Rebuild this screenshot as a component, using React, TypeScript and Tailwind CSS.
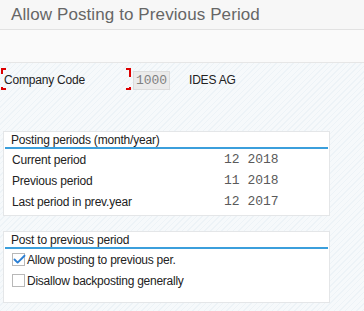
import { Check } from "lucide-react";

const periods = [
  { label: "Current period", value: "12 2018" },
  { label: "Previous period", value: "11 2018" },
  { label: "Last period in prev.year", value: "12 2017" },
];

const options = [
  { label: "Allow posting to previous per.", checked: true },
  { label: "Disallow backposting generally", checked: false },
];

const GroupBox = ({ title, children }: { title: string; children: React.ReactNode }) => (
  <div className="w-[327px] ml-[3px] bg-white border border-[#e4e6e8]">
    <div className="mx-[1px] h-[17px] pl-[6px] text-[12px] tracking-[-0.2px] leading-[17px] text-[#222] border-b-2 border-[#3b9fdc]">
      {title}
    </div>
    {children}
  </div>
);

export default function App() {
  return (
    <div className="w-[364px] h-[311px] overflow-hidden flex flex-col bg-white font-['Liberation_Sans',Arial,sans-serif]">
      <div className="h-[30px] shrink-0 bg-[#f7f7f7] border-b border-[#e2e2e2] pl-[11px] text-[17px] tracking-[0.1px] leading-[29px] text-[#666]">
        Allow Posting to Previous Period
      </div>
      <div className="h-[33px] shrink-0 bg-[#fafafa] border-b border-[#e6e6e6]" />

      <div className="flex-1 flex flex-col bg-[repeating-linear-gradient(135deg,#f6f9fb_0px,#f6f9fb_3px,#edf3f7_3px,#edf3f7_4px)]">
        <div className="flex items-center h-[22px] mt-[5px]">
          <div className="relative w-[130px] h-[22px] ml-[1px] pl-[3px] pt-[2px] flex items-center text-[12px] tracking-[-0.2px] text-[#222]">
            <span className="absolute left-0 top-0 w-[5px] h-[6px] border-l-2 border-t-2 border-[#d00]" />
            <span className="absolute left-0 bottom-0 w-[5px] h-[3px] border-l-2 border-b-2 border-[#d00]" />
            <span className="absolute right-0 top-0 w-[5px] h-[9px] border-r-2 border-t-2 border-[#d00]" />
            <span className="absolute right-0 bottom-0 w-[5px] h-[3px] border-r-2 border-b-2 border-[#d00]" />
            Company Code
          </div>
          <div className="ml-[2px] mt-[2px] w-[37px] h-[19px] bg-[#ebebeb] border border-[#dcdcdc] text-center font-['Liberation_Mono',monospace] text-[13px] leading-[17px] text-[#808080]">
            1000
          </div>
          <div className="ml-[19px] pt-[2px] text-[12px] tracking-[-0.2px] text-[#222]">IDES AG</div>
        </div>

        <div className="mt-[41px]">
          <GroupBox title="Posting periods (month/year)">
            <div className="flex flex-col pb-[3px]">
              {periods.map((p) => (
                <div key={p.label} className="flex items-center h-[21px] text-[12px] tracking-[-0.2px]">
                  <span className="w-[220px] pl-[8px] text-[#222]">{p.label}</span>
                  <span className="font-['Liberation_Mono',monospace] text-[13px] tracking-normal text-[#5a5a5a]">{p.value}</span>
                </div>
              ))}
            </div>
          </GroupBox>
        </div>

        <div className="mt-[15px]">
          <GroupBox title="Post to previous period">
            <div className="flex flex-col pb-[11px]">
              {options.map((o) => (
                <div key={o.label} className="flex items-center h-[21px] pl-[8px] text-[12px] tracking-[-0.25px] text-[#222]">
                  <span className="relative w-[13px] h-[13px] bg-white border border-[#b8b8b8] mr-[2px]">
                    {o.checked && (
                      <Check className="absolute -left-[1px] -top-[2px] w-[15px] h-[15px] text-[#2a7fd4]" strokeWidth={3} />
                    )}
                  </span>
                  {o.label}
                </div>
              ))}
            </div>
          </GroupBox>
        </div>
      </div>
    </div>
  );
}
